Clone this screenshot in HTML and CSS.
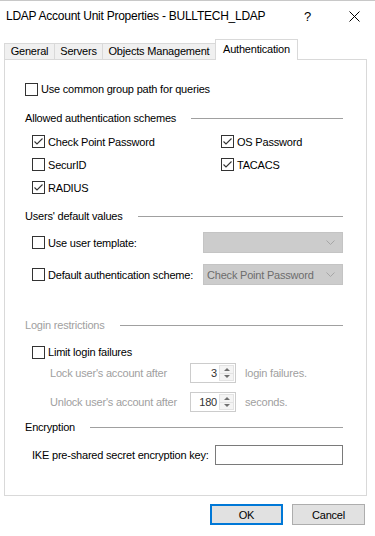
FILE: index.html
```html
<!DOCTYPE html>
<html>
<head>
<meta charset="utf-8">
<title>LDAP Account Unit Properties</title>
<link rel="stylesheet" href="styles.css">
</head>
<body>
<div class="window">
  <div class="titlebar">
    <span class="title">LDAP Account Unit Properties - BULLTECH_LDAP</span>
    <span class="help">?</span>
    <span class="close"><svg width="11" height="11" viewBox="0 0 11 11"><path d="M0.5 0.5L10.5 10.5M10.5 0.5L0.5 10.5" stroke="#000" stroke-width="1" fill="none"/></svg></span>
  </div>

  <div class="tabs">
    <div class="tab t-general">General</div>
    <div class="tab t-servers">Servers</div>
    <div class="tab t-objects">Objects Management</div>
    <div class="tab active t-auth">Authentication</div>
  </div>

  <div class="panel">
    <div class="cb row-common"><span class="box"></span><span>Use common group path for queries</span></div>

    <div class="group-head h-allowed"><span>Allowed authentication schemes</span><i class="rule"></i></div>
    <div class="schemes">
      <div class="cb"><span class="box"><svg class="tick" width="11" height="11" viewBox="0 0 11 11"><path d="M1.5 5.5L4 8L9.5 2.5" stroke="#333" stroke-width="1.1" fill="none"/></svg></span><span>Check Point Password</span></div>
      <div class="cb"><span class="box"><svg class="tick" width="11" height="11" viewBox="0 0 11 11"><path d="M1.5 5.5L4 8L9.5 2.5" stroke="#333" stroke-width="1.1" fill="none"/></svg></span><span>OS Password</span></div>
      <div class="cb"><span class="box"></span><span>SecurID</span></div>
      <div class="cb"><span class="box"><svg class="tick" width="11" height="11" viewBox="0 0 11 11"><path d="M1.5 5.5L4 8L9.5 2.5" stroke="#333" stroke-width="1.1" fill="none"/></svg></span><span>TACACS</span></div>
      <div class="cb"><span class="box"><svg class="tick" width="11" height="11" viewBox="0 0 11 11"><path d="M1.5 5.5L4 8L9.5 2.5" stroke="#333" stroke-width="1.1" fill="none"/></svg></span><span>RADIUS</span></div>
    </div>

    <div class="group-head h-users"><span>Users' default values</span><i class="rule"></i></div>
    <div class="field-row r-template">
      <div class="cb field-label"><span class="box"></span><span>Use user template:</span></div>
      <div class="combo"><span class="combo-text"></span><svg class="chev" width="9" height="5" viewBox="0 0 9 5"><path d="M0.5 0.5L4.5 4.5L8.5 0.5" stroke="#a6a6a6" stroke-width="1" fill="none"/></svg></div>
    </div>
    <div class="field-row r-default">
      <div class="cb field-label"><span class="box"></span><span>Default authentication scheme:</span></div>
      <div class="combo"><span class="combo-text">Check Point Password</span><svg class="chev" width="9" height="5" viewBox="0 0 9 5"><path d="M0.5 0.5L4.5 4.5L8.5 0.5" stroke="#a6a6a6" stroke-width="1" fill="none"/></svg></div>
    </div>

    <div class="group-head h-login disabled"><span>Login restrictions</span><i class="rule"></i></div>
    <div class="cb r-limit"><span class="box"></span><span>Limit login failures</span></div>
    <div class="spin-row r-lock disabled">
      <span class="spin-label">Lock user's account after</span>
      <div class="spinner"><span class="spin-val">3</span><span class="spin-btns"><span class="sb up"></span><span class="sb down"></span></span></div>
      <span class="spin-after">login failures.</span>
    </div>
    <div class="spin-row r-unlock disabled">
      <span class="spin-label">Unlock user's account after</span>
      <div class="spinner"><span class="spin-val">180</span><span class="spin-btns"><span class="sb up"></span><span class="sb down"></span></span></div>
      <span class="spin-after">seconds.</span>
    </div>

    <div class="group-head h-enc"><span>Encryption</span><i class="rule"></i></div>
    <div class="ike-row">
      <span class="ike-label">IKE pre-shared secret encryption key:</span>
      <div class="textbox"></div>
    </div>
  </div>

  <div class="footer">
    <div class="btn btn-ok">OK</div>
    <div class="btn">Cancel</div>
  </div>
</div>
</body>
</html>
```

FILE: styles.css
```css
html, body {
  margin: 0;
  padding: 0;
  background: #ffffff;
}
body {
  width: 375px;
  height: 536px;
  overflow: hidden;
  font-family: "Liberation Sans", Arial, sans-serif;
  font-size: 11px;
  letter-spacing: -0.2px;
  color: #000;
}
.window {
  border-top: 1px solid #c8c8c8;
  height: 535px;
}

/* title bar */
.titlebar {
  height: 30px;
  display: flex;
  align-items: center;
  padding-left: 6px;
  font-size: 12px;
  letter-spacing: -0.25px;
}
.title { flex: 1; }
.help { margin-right: 38px; font-size: 13px; }
.close { margin-right: 15px; display: flex; }

/* tabs */
.tabs {
  display: flex;
  align-items: flex-end;
  height: 20px;
  margin-top: 8px;
  padding-left: 4px;
  position: relative;
  z-index: 1;
}
.tab {
  box-sizing: border-box;
  height: 16px;
  border: 1px solid #d9d9d9;
  border-bottom: none;
  background: #f0f0f0;
  margin-right: -1px;
  display: flex;
  align-items: center;
  justify-content: center;
  padding-bottom: 1px;
}
.t-general { width: 51px; }
.t-servers { width: 49px; }
.t-objects { width: 114px; }
.t-auth { width: 83px; }
.tab.active {
  height: 21px;
  background: #fff;
  margin-bottom: -1px;
  padding-bottom: 3px;
  position: relative;
  z-index: 2;
}

/* panel */
.panel {
  box-sizing: border-box;
  margin-left: 4px;
  width: 363px;
  height: 437px;
  border: 1px solid #d9d9d9;
  background: #fff;
  padding: 0 23px 0 20px;
  display: flex;
  flex-direction: column;
}

.cb {
  display: flex;
  align-items: center;
  white-space: nowrap;
}
.box {
  box-sizing: border-box;
  width: 13px;
  height: 13px;
  border: 1px solid #333;
  background: #fff;
  margin-right: 3px;
  flex: none;
  display: flex;
  align-items: center;
  justify-content: center;
}
.tick { display: block; }

.row-common { height: 20px; margin-top: 19px; }

.group-head {
  display: flex;
  align-items: center;
  height: 14px;
  white-space: nowrap;
}
.rule {
  flex: 1;
  height: 0;
  border-top: 1px solid #a0a0a0;
  margin-left: 15px;
}
.disabled { color: #a0a0a0; }

.h-allowed { margin-top: 12px; }
.schemes {
  display: grid;
  grid-template-columns: 189px auto;
  grid-auto-rows: 23px;
  align-items: center;
  padding-left: 7px;
  margin-top: 5px;
}

.h-users { margin-top: 10px; }
.field-row {
  display: flex;
  align-items: center;
  height: 21px;
  padding-left: 7px;
}
.r-template { margin-top: 9px; }
.r-default { margin-top: 11px; }
.field-label { width: 171px; }
.combo {
  box-sizing: border-box;
  width: 140px;
  height: 21px;
  background: #cccccc;
  border: 1px solid #c4c4c4;
  display: flex;
  align-items: center;
  padding: 0 7px 0 3px;
  color: #6d6d6d;
}
.combo-text { flex: 1; white-space: nowrap; }
.chev { display: block; }

.h-login { margin-top: 33px; }
.r-limit { height: 20px; margin-top: 10px; padding-left: 7px; }

.spin-row {
  display: flex;
  align-items: center;
  height: 20px;
  padding-left: 25px;
}
.r-lock { margin-top: 1px; }
.r-unlock { margin-top: 9px; }
.spin-label { width: 140px; white-space: nowrap; }
.spinner {
  box-sizing: border-box;
  width: 46px;
  height: 20px;
  border: 1px solid #cccccc;
  background: #fff;
  display: flex;
  align-items: stretch;
  padding: 1px;
}
.spin-val {
  flex: 1;
  text-align: right;
  padding-right: 2px;
  color: #333;
  display: flex;
  align-items: center;
  justify-content: flex-end;
}
.spin-btns {
  width: 15px;
  display: flex;
  flex-direction: column;
}
.sb {
  flex: 1;
  box-sizing: border-box;
  border: 1px solid #e3e3e3;
  background: #f4f4f4;
  display: flex;
  align-items: center;
  justify-content: center;
}
.sb.down { border-top: none; }
.sb.up::after {
  content: "";
  border-left: 3px solid transparent;
  border-right: 3px solid transparent;
  border-bottom: 3px solid #707070;
}
.sb.down::after {
  content: "";
  border-left: 3px solid transparent;
  border-right: 3px solid transparent;
  border-top: 3px solid #707070;
}
.spin-after { margin-left: 9px; white-space: nowrap; }

.h-enc { margin-top: 8px; }
.ike-row {
  display: flex;
  align-items: center;
  height: 20px;
  margin-top: 11px;
  padding-left: 7px;
}
.ike-label { width: 183px; white-space: nowrap; }
.textbox {
  box-sizing: border-box;
  width: 128px;
  height: 20px;
  border: 1px solid #7a7a7a;
  background: #fff;
}

/* footer */
.footer {
  display: flex;
  justify-content: flex-end;
  gap: 9px;
  margin-top: 8px;
  padding-right: 10px;
}
.btn {
  box-sizing: border-box;
  width: 73px;
  height: 21px;
  border: 1px solid #adadad;
  background: #e1e1e1;
  display: flex;
  align-items: center;
  justify-content: center;
}
.btn-ok { border: 2px solid #0078d7; }
```
